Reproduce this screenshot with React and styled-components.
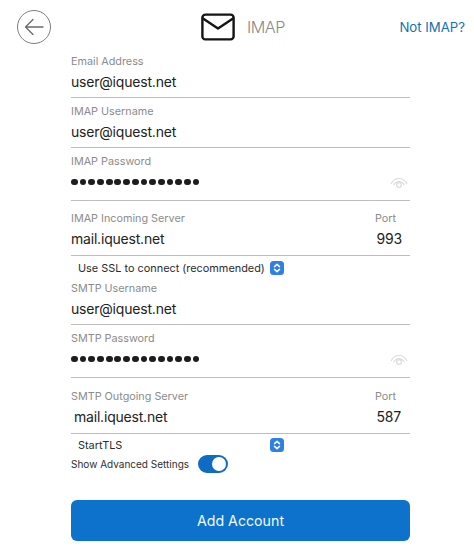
import React from "react";
import styled, { createGlobalStyle } from "styled-components";

const Global = createGlobalStyle`
  html, body { margin: 0; padding: 0; background: #fff; }
  body { font-family: "Inter", "Liberation Sans", sans-serif; -webkit-font-smoothing: antialiased; }
`;
const Page = styled.div`
  width: 474px; height: 556px; overflow: hidden; background: #fff; color: #1f1f1f;
`;
const Header = styled.header`
  height: 53px; display: grid; grid-template-columns: 1fr auto 1fr; align-items: center; padding: 0 9px 0 17px; box-sizing: border-box;
`;
const BackButton = styled.button`
  width: 34px; height: 34px; border-radius: 50%; border: 1px solid #7d7d7d; background: #fff; padding: 0;
  display: flex; align-items: center; justify-content: center; color: #6b6b6b; margin-top: 1px;
`;
const Title = styled.div`
  display: flex; align-items: center; gap: 12px; font-size: 16.2px; color: #8a8a8a; font-weight: 300; letter-spacing: -0.5px; padding-left: 4px;
`;
const NotImap = styled.a`
  justify-self: end; color: #1272b3; font-size: 13.2px; font-weight: 400; margin-top: 1px;
`;
const Form = styled.div`
  margin: 0 64px 0 71px; display: flex; flex-direction: column;
`;
const Field = styled.div`
  height: ${p => p.$h}px; box-sizing: border-box; border-bottom: 1px solid #bdbdbd; display: flex; flex-direction: column;
`;
const LabelRow = styled.div`
  display: flex; justify-content: space-between; font-size: 10.8px; color: #8b8b8b; line-height: 14px; padding: ${p => p.$top}px 14px 0 0;
`;
const ValueRow = styled.div`
  display: flex; justify-content: space-between; align-items: center; font-size: 14px; letter-spacing: -0.2px; color: #222; line-height: 20px; margin-top: 3px; padding-right: ${p => p.$right || 0}px;
`;
const ValueText = styled.span`
  padding-left: ${p => p.$indent || 0}px;
`;
const Dots = styled.div`
  display: flex; gap: 1.9px; height: 20px; align-items: center; margin-top: 3px;
`;
const Dot = styled.span`
  width: 6.8px; height: 6.8px; border-radius: 50%; background: #1d1d1d;
`;
const PasswordRow = styled.div`
  display: flex; justify-content: space-between; align-items: center; padding-right: 2px;
`;
const EyeIcon = styled.svg`
  width: 18px; height: 12px; margin-top: 5px; color: #dcdcdc;
`;
const SelectRow = styled.div`
  height: ${p => p.$h}px; display: flex; align-items: center; padding-left: 7px; box-sizing: border-box; font-size: 10.9px; color: #2b2b2b;
`;
const SelectText = styled.span`
  width: 192px;
`;
const Stepper = styled.span`
  width: 14px; height: 14px; border-radius: 3.5px; background: #2f7fe4; display: flex; align-items: center; justify-content: center;
`;
const ToggleRow = styled.div`
  height: 16px; display: flex; align-items: center; gap: 9px; font-size: 10px; color: #2e2e2e; margin-bottom: 28px;
`;
const Toggle = styled.span`
  width: 30px; height: 18px; border-radius: 9px; background: #0f6cc4; display: flex; align-items: center; justify-content: flex-end; padding-right: 2px; box-sizing: border-box;
`;
const Knob = styled.span`
  width: 14px; height: 14px; border-radius: 50%; background: #fff;
`;
const AddButton = styled.button`
  height: 41px; border: none; border-radius: 6px; background: #0c72cc; color: #f4f9fd; font: 400 14.2px "Inter", "Liberation Sans", sans-serif;
`;

const StepperIcon = () => (
  <Stepper>
    <svg width="8" height="10" viewBox="0 0 8 10" fill="none" stroke="#fff" strokeWidth="1.5" strokeLinecap="round" strokeLinejoin="round">
      <path d="M1.5 3.6 4 1.4l2.5 2.2M1.5 6.4 4 8.6l2.5-2.2" />
    </svg>
  </Stepper>
);
const Eye = () => (
  <EyeIcon viewBox="0 0 18 12" fill="none" stroke="currentColor" strokeWidth="1.2">
    <path d="M1 7C3 3.2 5.8 1.5 9 1.5S15 3.2 17 7" />
    <path d="M3.6 8.2C5 5.8 6.8 4.6 9 4.6s4 1.2 5.4 3.6" />
    <circle cx="9" cy="8" r="2.4" />
  </EyeIcon>
);
const Password = () => (
  <PasswordRow>
    <Dots>
      {Array.from({ length: 15 }, (_, i) => <Dot key={i} />)}
    </Dots>
    <Eye />
  </PasswordRow>
);

export default function App() {
  return (
    <Page>
      <Global />
      <Header>
        <BackButton aria-label="Back">
          <svg width="20" height="18" viewBox="0 0 20 18" fill="none" stroke="currentColor" strokeWidth="1.3" strokeLinecap="round" strokeLinejoin="round">
            <path d="M19 9H1.5M9 1.5 1.5 9 9 16.5" />
          </svg>
        </BackButton>
        <Title>
          <svg width="34" height="28" viewBox="0 0 34 28" fill="none" stroke="#141414" strokeWidth="2.4" strokeLinejoin="round" strokeLinecap="round">
            <rect x="1.4" y="1.6" width="31.2" height="24.8" rx="3" />
            <path d="M2 5.5 17 15.5 32 5.5" />
          </svg>
          IMAP
        </Title>
        <NotImap>Not IMAP?</NotImap>
      </Header>
      <Form>
        <Field $h={45}>
          <LabelRow $top={2}>Email Address</LabelRow>
          <ValueRow>user@iquest.net</ValueRow>
        </Field>
        <Field $h={50}>
          <LabelRow $top={7}>IMAP Username</LabelRow>
          <ValueRow>user@iquest.net</ValueRow>
        </Field>
        <Field $h={53}>
          <LabelRow $top={7}>IMAP Password</LabelRow>
          <Password />
        </Field>
        <Field $h={55}>
          <LabelRow $top={11}>IMAP Incoming Server<span>Port</span></LabelRow>
          <ValueRow $right={8}>mail.iquest.net<span>993</span></ValueRow>
        </Field>
        <SelectRow $h={24}>
          <SelectText>Use SSL to connect (recommended)</SelectText>
          <StepperIcon />
        </SelectRow>
        <Field $h={45}>
          <LabelRow $top={2}>SMTP Username</LabelRow>
          <ValueRow>user@iquest.net</ValueRow>
        </Field>
        <Field $h={53}>
          <LabelRow $top={7}>SMTP Password</LabelRow>
          <Password />
        </Field>
        <Field $h={56}>
          <LabelRow $top={12}>SMTP Outgoing Server<span>Port</span></LabelRow>
          <ValueRow $right={9}><ValueText $indent={3}>mail.iquest.net</ValueText><span>587</span></ValueRow>
        </Field>
        <SelectRow $h={22}>
          <SelectText>StartTLS</SelectText>
          <StepperIcon />
        </SelectRow>
        <ToggleRow>
          Show Advanced Settings
          <Toggle><Knob /></Toggle>
        </ToggleRow>
        <AddButton>Add Account</AddButton>
      </Form>
    </Page>
  );
}
